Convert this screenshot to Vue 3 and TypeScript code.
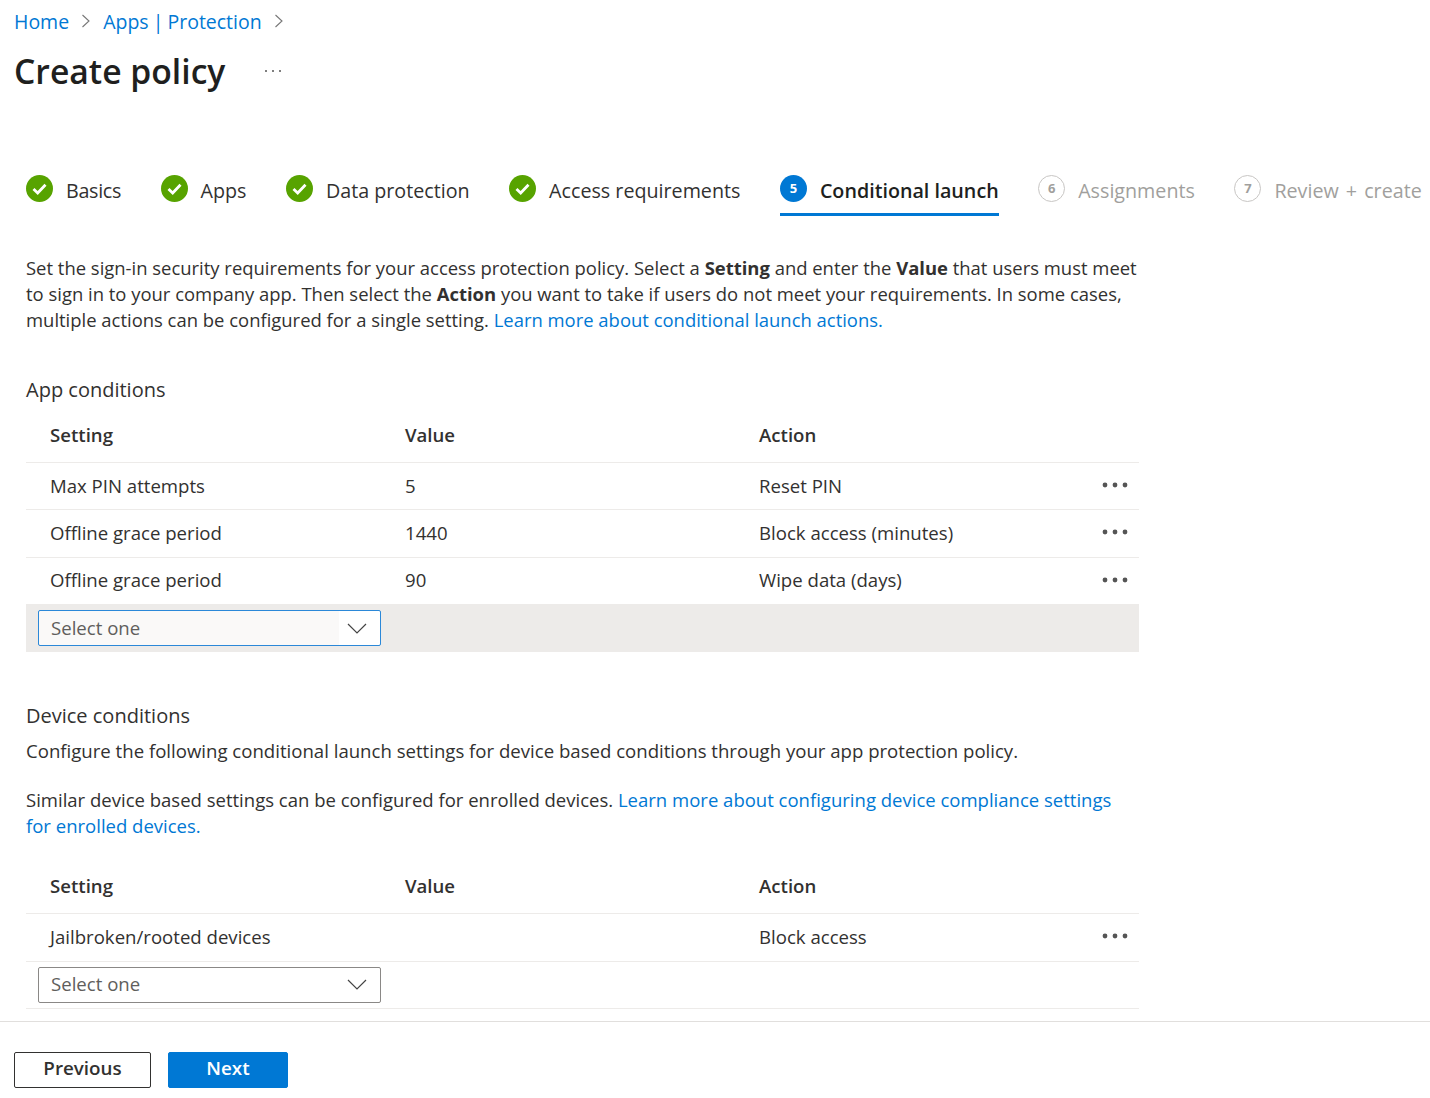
<script setup lang="ts">
interface Step { label: string; state: 'done' | 'active' | 'todo'; num: number }
interface Row { setting: string; value: string; action: string }

const steps: Step[] = [
  { label: 'Basics', state: 'done', num: 1 },
  { label: 'Apps', state: 'done', num: 2 },
  { label: 'Data protection', state: 'done', num: 3 },
  { label: 'Access requirements', state: 'done', num: 4 },
  { label: 'Conditional launch', state: 'active', num: 5 },
  { label: 'Assignments', state: 'todo', num: 6 },
  { label: 'Review + create', state: 'todo', num: 7 },
];

const appRows: Row[] = [
  { setting: 'Max PIN attempts', value: '5', action: 'Reset PIN' },
  { setting: 'Offline grace period', value: '1440', action: 'Block access (minutes)' },
  { setting: 'Offline grace period', value: '90', action: 'Wipe data (days)' },
];

const deviceRows: Row[] = [
  { setting: 'Jailbroken/rooted devices', value: '', action: 'Block access' },
];
</script>

<template>
  <div class="page">
    <nav class="crumbs">
      <a>Home</a>
      <svg class="crumb-sep" width="12" height="16" viewBox="0 0 12 16"><path d="M2.5 2 L9 8 L2.5 14" fill="none" stroke="#777" stroke-width="1.1" /></svg>
      <a>Apps | Protection</a>
      <svg class="crumb-sep" width="12" height="16" viewBox="0 0 12 16"><path d="M2.5 2 L9 8 L2.5 14" fill="none" stroke="#777" stroke-width="1.1" /></svg>
    </nav>
    <div class="title-row">
      <h1>Create policy</h1>
      <svg class="title-more" width="18" height="4" viewBox="0 0 18 4"><circle cx="2" cy="2" r="1" fill="#555" /><circle cx="9" cy="2" r="1" fill="#555" /><circle cx="16" cy="2" r="1" fill="#555" /></svg>
    </div>

    <div class="steps">
      <div v-for="s in steps" :key="s.num" class="step" :class="s.state">
        <span class="badge">
          <svg v-if="s.state === 'done'" width="27" height="27" viewBox="0 0 27 27">
            <circle cx="13.5" cy="13.5" r="13.5" fill="#57a300" />
            <path d="M7.5 14 L11.7 18 L19.5 9.8" fill="none" stroke="#fff" stroke-width="2.8" />
          </svg>
          <span v-else class="badge-num">{{ s.num }}</span>
        </span>
        <span class="step-label">{{ s.label }}</span>
      </div>
    </div>

    <main class="content">
      <p class="intro">
        Set the sign-in security requirements for your access protection policy. Select a <b>Setting</b> and enter the <b>Value</b> that users must meet<br />
        to sign in to your company app. Then select the <b>Action</b> you want to take if users do not meet your requirements. In some cases,<br />
        multiple actions can be configured for a single setting. <a>Learn more about conditional launch actions.</a>
      </p>

      <h2 class="app-title">App conditions</h2>
      <div class="table">
        <div class="row head"><span>Setting</span><span>Value</span><span>Action</span></div>
        <div v-for="(r, i) in appRows" :key="i" class="row">
          <span>{{ r.setting }}</span><span>{{ r.value }}</span><span>{{ r.action }}</span>
          <svg class="dots" width="26" height="6" viewBox="0 0 26 6"><circle cx="3" cy="3" r="2.4" /><circle cx="13" cy="3" r="2.4" /><circle cx="23" cy="3" r="2.4" /></svg>
        </div>
        <div class="select-row grey">
          <div class="select focus">
            <span class="select-text">Select one</span>
            <svg width="20" height="11" viewBox="0 0 20 11"><path d="M1 1 L10 10 L19 1" fill="none" stroke="#444" stroke-width="1.2" /></svg>
          </div>
        </div>
      </div>

      <h2 class="device-title">Device conditions</h2>
      <p class="device-line">Configure the following conditional launch settings for device based conditions through your app protection policy.</p>
      <p class="device-note">
        Similar device based settings can be configured for enrolled devices. <a>Learn more about configuring device compliance settings<br />for enrolled devices.</a>
      </p>
      <div class="table device-table">
        <div class="row head"><span>Setting</span><span>Value</span><span>Action</span></div>
        <div v-for="(r, i) in deviceRows" :key="i" class="row">
          <span>{{ r.setting }}</span><span>{{ r.value }}</span><span>{{ r.action }}</span>
          <svg class="dots" width="26" height="6" viewBox="0 0 26 6"><circle cx="3" cy="3" r="2.4" /><circle cx="13" cy="3" r="2.4" /><circle cx="23" cy="3" r="2.4" /></svg>
        </div>
        <div class="select-row">
          <div class="select">
            <span class="select-text">Select one</span>
            <svg width="20" height="11" viewBox="0 0 20 11"><path d="M1 1 L10 10 L19 1" fill="none" stroke="#444" stroke-width="1.2" /></svg>
          </div>
        </div>
      </div>
    </main>

    <footer class="footer">
      <button class="btn" type="button">Previous</button>
      <button class="btn primary" type="button">Next</button>
    </footer>
  </div>
</template>

<style>
html, body { margin: 0; background: #fff; }
</style>

<style scoped>
.page {
  height: 1098px;
  overflow: hidden;
  display: flex;
  flex-direction: column;
  font-family: "Open Sans", "Noto Sans", sans-serif;
  font-size: 18.6px;
  color: #323130;
}
a { color: #0078d4; }
.crumbs {
  height: 42px;
  padding-left: 14px;
  display: flex;
  align-items: center;
  font-size: 19.5px;
  word-spacing: -1px;
  color: #0078d4;
  box-sizing: border-box;
}
.crumb-sep { margin: 0 11px 0 11px; }
.title-row {
  height: 58px;
  padding-left: 14px;
  display: flex;
  align-items: center;
}
h1 {
  margin: 0;
  font-size: 33.7px;
  font-weight: 600;
  color: #201f1e;
}
.title-more { margin-left: 39px; }
.steps {
  margin-top: 61px;
  padding-left: 26px;
  display: flex;
  gap: 39.5px;
  white-space: nowrap;
  font-size: 19.7px;
}
.step {
  height: 55px;
  display: flex;
  align-items: flex-start;
  gap: 13px;
  box-sizing: border-box;
  padding-top: 14px;
}
.step:first-child { letter-spacing: -0.3px; }
.step-label { line-height: 27px; margin-top: 2px; }
.badge {
  width: 27px;
  height: 27px;
  flex: none;
  border-radius: 50%;
  display: flex;
  align-items: center;
  justify-content: center;
  box-sizing: border-box;
  font-size: 13px;
  font-weight: 700;
}
.badge-num { margin-top: -2px; }
.step.active { border-bottom: 3px solid #0078d4; color: #201f1e; font-weight: 600; }
.step.active .badge { background: #0078d4; color: #fff; }
.step.todo { color: #a19f9d; word-spacing: 2px; }
.step.todo .badge { border: 1.5px solid #c8c6c4; }
.content { padding-left: 26px; width: 1113px; }
.intro { margin: 39px 0 0; font-size: 18.45px; line-height: 26px; white-space: nowrap; }
h2 { margin: 0; font-size: 20px; font-weight: 400; line-height: 26px; }
.app-title { margin-top: 44px; }
.table { display: flex; flex-direction: column; }
.device-table { margin-top: 15px; }
.row {
  position: relative;
  display: grid;
  grid-template-columns: 355px 354px 1fr;
  padding: 0 0 2px 24px;
  height: 47.4px;
  align-items: center;
  border-bottom: 1px solid #edebe9;
  box-sizing: border-box;
}
.row.head { height: 60px; font-weight: 600; padding: 3px 0 0 24px; }
.dots { position: absolute; right: 11px; top: 19px; fill: #555; }
.select-row {
  height: 47px;
  padding-left: 12px;
  display: flex;
  align-items: center;
  border-bottom: 1px solid #edebe9;
  box-sizing: border-box;
}
.select-row.grey { background: #edebe9; }
.select {
  width: 343px;
  height: 36px;
  box-sizing: border-box;
  border: 1px solid #8a8886;
  border-radius: 2px;
  background: #fff;
  display: flex;
  align-items: center;
  justify-content: space-between;
  padding: 0 13px 0 12px;
  color: #605e5c;
}
.select-text { margin-top: -2px; }
.select.focus {
  border-color: #2b88d8;
  background: linear-gradient(to right, #faf9f8 300px, #fff 300px);
}
.device-title { margin-top: 51px; }
.device-line { margin: 9px 0 0; line-height: 26px; white-space: nowrap; }
.device-note { margin: 23px 0 0; font-size: 18.53px; line-height: 26px; white-space: nowrap; }
.footer {
  margin-top: 12px;
  border-top: 1px solid #e1dfdd;
  padding: 30px 0 0 14px;
  display: flex;
  gap: 17px;
}
.btn {
  width: 137px;
  height: 36px;
  border: 1px solid #323130;
  border-radius: 2px;
  background: #fff;
  font-family: inherit;
  font-size: 18.8px;
  font-weight: 600;
  color: #323130;
  padding: 0 0 3px;
}
.btn.primary { width: 120px; background: #0078d4; border-color: #0078d4; color: #fff; }
</style>
